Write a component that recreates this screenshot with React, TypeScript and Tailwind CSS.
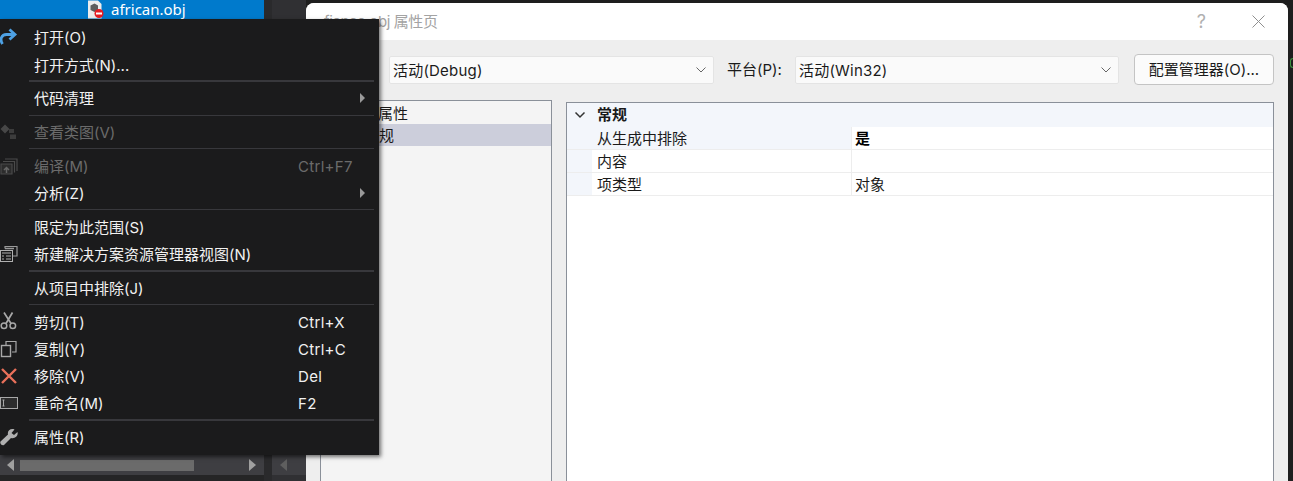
import React from "react";

const font = { fontFamily: 'Inter, "Noto Sans CJK SC", sans-serif' };

type MenuRow =
  | { sep: "thin" | "thick" }
  | { label: string; key?: string; sub?: boolean; off?: boolean; icon?: React.ReactNode };

const Sharp = ({ children }: { children: React.ReactNode }) => (
  <svg width="18" height="18" viewBox="0 0 18 18" fill="none" className="shrink-0">
    {children}
  </svg>
);

const menuRows: MenuRow[] = [
  {
    label: "打开(O)",
    icon: (
      <Sharp>
        <path d="M2.500 16C-0.500 11.500 1.500 6.500 6.500 6.500H13" stroke="#4ea1e4" strokeWidth="2.800" />
        <path d="M9.500 1.500L15 6.500L9.500 11.500" stroke="#4ea1e4" strokeWidth="2.800" />
      </Sharp>
    ),
  },
  { label: "打开方式(N)..." },
  { sep: "thick" },
  { label: "代码清理", sub: true },
  { sep: "thin" },
  {
    label: "查看类图(V)",
    off: true,
    icon: (
      <Sharp>
        <path d="M0.500 6L5 1.500L9.500 6L5 10.500Z" fill="#474747" />
        <path d="M9 6H14V10H9ZM10 11.500H16V16H10Z" fill="#3c3c3c" />
      </Sharp>
    ),
  },
  { sep: "thin" },
  {
    label: "编译(M)",
    key: "Ctrl+F7",
    off: true,
    icon: (
      <Sharp>
        <path d="M5 2H17V14M3 4.500H14.500V15.500" stroke="#4a4a4a" strokeWidth="1.200" />
        <path d="M1 7H12V17H1Z" fill="#2c2c2c" stroke="#4a4a4a" strokeWidth="1.200" />
        <path d="M6.500 16V10.500M4 13L6.500 10.500L9 13" stroke="#666" strokeWidth="1.500" />
      </Sharp>
    ),
  },
  { label: "分析(Z)", sub: true },
  { sep: "thin" },
  { label: "限定为此范围(S)" },
  {
    label: "新建解决方案资源管理器视图(N)",
    icon: (
      <Sharp>
        <path d="M5 3.500V1.500H17V11H13" stroke="#9a9a9a" strokeWidth="1.200" />
        <path d="M5 3.500H14" stroke="#9a9a9a" strokeWidth="1.500" />
        <rect x="0.500" y="5.500" width="12" height="11" fill="#1b1b1b" stroke="#b0b0b0" />
        <path d="M2 8H11M2 11H4M6 11H11M2 14H4M6 14H11" stroke="#b0b0b0" strokeWidth="1.200" />
      </Sharp>
    ),
  },
  { sep: "thick" },
  { label: "从项目中排除(J)" },
  { sep: "thin" },
  {
    label: "剪切(T)",
    key: "Ctrl+X",
    icon: (
      <Sharp>
        <path d="M4 0.500L11 11.500M12.500 0.500L6 11.500" stroke="#a8a8a8" strokeWidth="1.700" />
        <circle cx="4" cy="13.800" r="2.800" stroke="#a8a8a8" strokeWidth="1.500" />
        <circle cx="12.800" cy="13.800" r="2.800" stroke="#a8a8a8" strokeWidth="1.500" />
      </Sharp>
    ),
  },
  {
    label: "复制(Y)",
    key: "Ctrl+C",
    icon: (
      <Sharp>
        <path d="M6 5V1.500H16V12H12" stroke="#a8a8a8" strokeWidth="1.200" />
        <rect x="1.500" y="5.500" width="9" height="11" stroke="#a8a8a8" strokeWidth="1.400" />
      </Sharp>
    ),
  },
  {
    label: "移除(V)",
    key: "Del",
    icon: (
      <Sharp>
        <path d="M2 2L16 16M16 2L2 16" stroke="#e8705a" strokeWidth="2.400" />
      </Sharp>
    ),
  },
  {
    label: "重命名(M)",
    key: "F2",
    icon: (
      <Sharp>
        <rect x="0.500" y="3.500" width="17" height="11" fill="#2c2c2c" stroke="#a8a8a8" />
        <path d="M3.500 6V12M2.500 6H4.500M2.500 12H4.500" stroke="#a8a8a8" />
      </Sharp>
    ),
  },
  { sep: "thick" },
  {
    label: "属性(R)",
    icon: (
      <Sharp>
        <path
          d="M17.500 4L14 7L11.500 5L14.500 1.500C10.500 0 7 3 8 6.500L0.500 13.500C-0.500 15.500 2 18 4 17L11 10C15 11 18.500 8 17.500 4Z"
          fill="#b0b0b0"
        />
      </Sharp>
    ),
  },
];

const Menu = () => (
  <div className="absolute left-0 top-[19px] h-[436px] w-[379px] bg-[#1b1b1c] pt-[4.5px] shadow-[2px_2px_4px_rgba(0,0,0,0.55)]">
    {menuRows.map((row, i) =>
      "sep" in row ? (
        <div key={i} className="flex h-[6.5px] items-center pl-[29px] pr-[5px]">
          <div className={row.sep === "thick" ? "h-[2px] w-full bg-[#38383c]" : "h-px w-full bg-[#38383c]"} />
        </div>
      ) : (
        <div
          key={i}
          className={`relative flex h-[27.25px] items-center text-[15px] ${row.off ? "text-[#6b6b6b]" : "text-[#f1f1f1]"}`}
        >
          <div className="flex w-[34px] shrink-0 items-center">{row.icon}</div>
          <span className="flex-1 whitespace-nowrap pt-[3px]">{row.label}</span>
          {row.key && <span className="w-[81px] shrink-0 whitespace-nowrap pt-[3px] tracking-[0.3px]">{row.key}</span>}
          {row.sub && (
            <span className="absolute right-[14px] h-0 w-0 border-y-[5px] border-l-[5px] border-y-transparent border-l-[#9a9a9a]" />
          )}
        </div>
      )
    )}
  </div>
);

const Chevron = () => (
  <svg width="12" height="8" viewBox="0 0 12 8" fill="none">
    <path d="M1.500 1.500L6 6L10.500 1.500" stroke="#666" strokeWidth="1" />
  </svg>
);

const Select = ({ value, width }: { value: string; width: string }) => (
  <div
    className={`flex h-[28px] items-center justify-between rounded-[2px] border border-[#e4e4e4] bg-[#fafafa] pl-[3px] pr-[6px] text-[15px] leading-[28px] text-[#1a1a1a] ${width}`}
  >
    <span className="pt-[2px] tracking-[0.2px]">{value}</span>
    <Chevron />
  </div>
);

const PropRow = ({ name, value, active }: { name: string; value?: string; active?: boolean }) => (
  <div className="flex h-[23px] border-b border-[#ededed] text-[15px] leading-[23px] text-[#1a1a1a]">
    <div className={`w-[284px] shrink-0 pl-[30px] ${active ? "bg-[#f3f6fb]" : "border-l-[25px] border-l-[#f3f6fb] !pl-[5px]"}`}>
      {name}
    </div>
    <div className={`flex-1 border-l border-[#ededed] pl-[3px] ${active ? "font-bold text-black" : ""}`}>{value}</div>
  </div>
);

const Dialog = () => (
  <div className="absolute left-[306px] top-[3px] flex h-[520px] w-[982px] flex-col overflow-hidden rounded-t-[8px] bg-[#eeeeee]">
    <div className="flex h-[37px] shrink-0 items-center justify-between bg-white pl-[18px] pr-[23px] text-[15px] text-[#a3a3a3]">
      <span className="pt-[2px] tracking-[-0.4px]">fiance.obj 属性页</span>
      <div className="flex items-center gap-[46px]">
        <span className="text-[18px] text-[#b0b0b0]">?</span>
        <svg width="13" height="13" viewBox="0 0 13 13" fill="none">
          <path d="M0.500 0.500L12.500 12.500M12.500 0.500L0.500 12.500" stroke="#8f8f8f" />
        </svg>
      </div>
    </div>
    <div className="flex flex-1 flex-col pl-[14px] pr-[14px] pt-[14px]">
      <div className="flex h-[31px] items-center">
        <span className="w-[69px] shrink-0 whitespace-nowrap text-[15px] text-[#1a1a1a]">配置(C):</span>
        <Select value="活动(Debug)" width="w-[325px]" />
        <span className="w-[81px] shrink-0 whitespace-nowrap pl-[13px] pt-[2px] text-[15px] text-[#1a1a1a]">平台(P):</span>
        <Select value="活动(Win32)" width="w-[324px]" />
        <div className="ml-[15px] flex h-[31px] flex-1 items-center justify-center rounded-[4px] border border-[#c4c4c4] bg-[#fbfbfb] pt-[2px] text-[15px] text-[#1a1a1a]">
          配置管理器(O)...
        </div>
      </div>
      <div className="mt-[15px] flex flex-1 items-start">
        <div className="h-[400px] w-[232px] shrink-0 border border-[#8a9099] bg-[#f4f4f4] text-[15px] text-[#1a1a1a]">
          <div className="h-[23px] pl-[27px] leading-[26px]">配置属性</div>
          <div className="h-[22px] bg-[#cccedb] pl-[43px] leading-[24px]">常规</div>
        </div>
        <div className="ml-[14px] mt-[2px] h-[400px] flex-1 border border-[#8a9099] bg-white">
          <div className="flex h-[24px] items-center bg-[#f3f6fb] text-[15px] font-bold text-[#1a1a1a]">
            <svg width="12" height="8" viewBox="0 0 12 8" fill="none" className="ml-[7px] mr-[11px]">
              <path d="M1.500 1.500L6 6L10.500 1.500" stroke="#333" strokeWidth="1.500" />
            </svg>
            常规
          </div>
          <PropRow name="从生成中排除" value="是" active />
          <PropRow name="内容" />
          <PropRow name="项类型" value="对象" />
        </div>
      </div>
    </div>
  </div>
);

const Arrow = ({ dir, color }: { dir: "l" | "r"; color: string }) => (
  <span
    className={`h-0 w-0 border-y-[6px] border-y-transparent ${dir === "l" ? "border-r-[7px]" : "border-l-[7px]"}`}
    style={dir === "l" ? { borderRightColor: color } : { borderLeftColor: color }}
  />
);

export default function App() {
  return (
    <div className="relative flex h-[481px] w-[1293px] overflow-hidden bg-[#1e1e1e]" style={font}>
      {/* solution explorer behind the menu */}
      <div className="flex h-full w-[264px] shrink-0 flex-col bg-[#252526]">
        <div
          className="flex h-[19px] shrink-0 items-center bg-[#007acc] pl-[87px] text-[15px] text-white"
          style={{ fontFamily: '"Noto Sans", sans-serif' }}
        >
          <svg width="18" height="19" viewBox="0 0 18 19" className="mr-[6px] shrink-0">
            <path d="M1 0.500H11L14.500 4V18.500H1Z" fill="#ececec" />
            <path d="M3.500 5.500L7.500 3.500L11 5.500V10L7.500 12L3.500 10Z" fill="#5c5c5c" />
            <circle cx="12" cy="13.500" r="4.500" fill="#e51c23" />
            <rect x="9" y="12.500" width="6" height="2" fill="#fff" />
          </svg>
          african.obj
        </div>
        <div className="mt-auto mb-[6px] flex h-[20px] items-center justify-between bg-[#3e3e42] pl-[7px] pr-[8px]">
          <Arrow dir="l" color="#a0a0a0" />
          <div className="ml-[6px] mr-auto h-[11px] w-[174px] bg-[#6b6b6b]" />
          <Arrow dir="r" color="#a0a0a0" />
        </div>
      </div>
      <div className="h-full w-[8px] shrink-0 bg-[#2a2a2c]" />
      <div className="flex h-full w-[34px] shrink-0 flex-col bg-[#303033]">
        <div className="mt-auto mb-[6px] flex h-[20px] items-center bg-[#3e3e42] pl-[8px]">
          <Arrow dir="l" color="#5f5f5f" />
        </div>
      </div>
      <div className="flex-1" />
      <Dialog />
      <Menu />
      {/* editor margin marks peeking out right of the dialog */}
      <div className="absolute right-0 top-[58px] h-[10px] w-[3px] rounded-l-[3px] border border-r-0 border-[#3f8f3f]" />
    </div>
  );
}
